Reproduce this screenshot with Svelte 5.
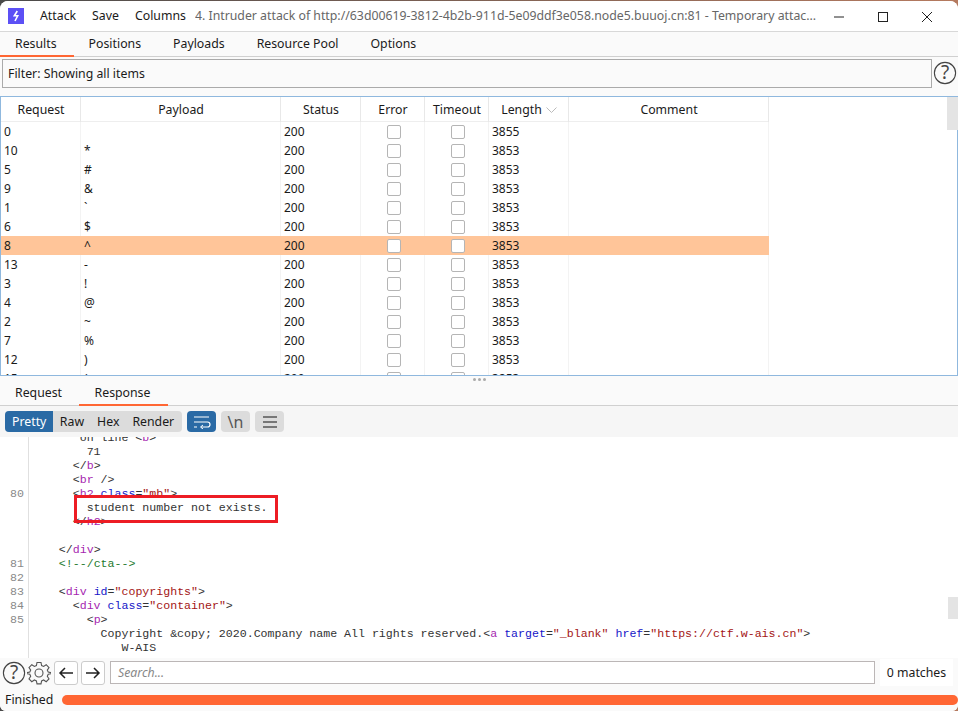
<script>
  const tabs = ['Results', 'Positions', 'Payloads', 'Resource Pool', 'Options'];
  const rows = [
    ['0', '', '3855'], ['10', '*', '3853'], ['5', '#', '3853'], ['9', '&', '3853'],
    ['1', '`', '3853'], ['6', '$', '3853'], ['8', '^', '3853'], ['13', '-', '3853'],
    ['3', '!', '3853'], ['4', '@', '3853'], ['2', '~', '3853'], ['7', '%', '3853'],
    ['12', ')', '3853'], ['15', '(', '3853']
  ];
  const nums = ['', '', '', '', '80', '', '', '', '', '81', '82', '83', '84', '85', '', ''];
</script>

<div class="win">
  <header class="title">
    <span class="logo">
      <svg width="16" height="16" viewBox="0 0 16 16"><rect width="16" height="16" fill="#5c50f5"/><path d="M9.300 3 6.300 7.800h3.400L7 13" fill="none" stroke="#fff" stroke-width="1.600"/></svg>
    </span>
    <nav class="menu"><span>Attack</span><span>Save</span><span>Columns</span></nav>
    <span class="wintitle">4. Intruder attack of http://63d00619-3812-4b2b-911d-5e09ddf3e058.node5.buuoj.cn:81 - Temporary attac...</span>
    <div class="controls">
      <svg width="10" height="10" viewBox="0 0 10 10"><path d="M0 5h10" stroke="#222"/></svg>
      <svg width="10" height="10" viewBox="0 0 10 10"><rect x=".5" y=".5" width="9" height="9" fill="none" stroke="#222"/></svg>
      <svg width="10" height="10" viewBox="0 0 10 10"><path d="m0 0 10 10M10 0 0 10" stroke="#222"/></svg>
    </div>
  </header>

  <div class="tabs main">
    {#each tabs as t, i}<span class="tab" class:on={i === 0}>{t}</span>{/each}
  </div>

  <div class="filter">
    <div class="fbox">Filter: Showing all items</div>
    <svg class="help" width="24" height="24" viewBox="0 0 24 24"><circle cx="12" cy="12" r="10.600" fill="none" stroke="#444" stroke-width="1.100"/><text x="12" y="17.500" text-anchor="middle" class="q">?</text></svg>
  </div>

  <section class="table">
    <div class="grid">
      <div class="row head">
        <span>Request</span><span>Payload</span><span>Status</span><span>Error</span><span>Timeout</span>
        <span class="len">Length <svg width="11" height="6" viewBox="0 0 11 6"><path d="m.5.5 5 5 5-5" fill="none" stroke="#bbb"/></svg></span>
        <span>Comment</span>
      </div>
      {#each rows as r, i}
        <div class="row" class:sel={i === 6}>
          <span>{r[0]}</span><span class="pl">{r[1]}</span><span>200</span>
          <span class="c"><i class="box"></i></span><span class="c"><i class="box"></i></span>
          <span class="lv">{r[2]}</span><span></span>
        </div>
      {/each}
    </div>
    <div class="sb"><div class="thumb"></div></div>
  </section>

  <div class="split"><i></i><i></i><i></i></div>

  <div class="tabs sub">
    <span class="tab">Request</span><span class="tab on">Response</span>
  </div>

  <div class="tools">
    <div class="seg"><span class="act">Pretty</span><span>Raw</span><span>Hex</span><span>Render</span></div>
    <span class="tb blue"><svg width="18" height="14" viewBox="0 0 18 14"><path d="M1 2h15M1 7h13.500a2.500 2.500 0 0 1 0 5H8M1 12h3" fill="none" stroke="#fff" stroke-width="1.200"/><path d="m10 10-2.500 2 2.500 2" fill="none" stroke="#fff"/></svg></span>
    <span class="tb txt">\n</span>
    <span class="tb"><svg width="16" height="12" viewBox="0 0 16 12"><path d="M1 1h14M1 6h14M1 11h14" stroke="#555" stroke-width="1.400"/></svg></span>
  </div>

  <section class="code">
    <div class="nums">{#each nums as n}<div>{n || ' '}</div>{/each}</div>
    <pre class="src">       on line &lt;<b class="t">b</b>&gt;
        71
      &lt;/<b class="t">b</b>&gt;
      &lt;<b class="t">br</b> /&gt;
      &lt;<b class="t">h2</b> <b class="a">class</b>=<b class="v">"mb"</b>&gt;
        student number not exists.
      &lt;/<b class="t">h2</b>&gt;

    &lt;/<b class="t">div</b>&gt;
    <b class="cm">&lt;!--/cta--&gt;</b>

    &lt;<b class="t">div</b> <b class="a">id</b>=<b class="v">"copyrights"</b>&gt;
      &lt;<b class="t">div</b> <b class="a">class</b>=<b class="v">"container"</b>&gt;
        &lt;<b class="t">p</b>&gt;
          Copyright &amp;copy; 2020.Company name All rights reserved.&lt;<b class="t">a</b> <b class="a">target</b>=<b class="v">"_blank"</b> <b class="a">href</b>=<b class="v">"https://ctf.w-ais.cn"</b>&gt;
             W-AIS</pre>
    <div class="mark"></div>
    <div class="cthumb"></div>
  </section>

  <div class="searchbar">
    <svg class="qi" width="24" height="24" viewBox="0 0 24 24"><circle cx="12" cy="12" r="10.600" fill="none" stroke="#444" stroke-width="1.100"/><text x="12" y="17.500" text-anchor="middle" class="q">?</text></svg>
    <svg class="gear" width="24" height="24" viewBox="0 0 24 24"><circle cx="12" cy="12" r="4" fill="none" stroke="#555" stroke-width="1.100"/><path d="M10 1.500h4l.6 3 2 .9 2.600-1.700 2.800 2.800-1.700 2.600.9 2 3 .6v1l-3 .6-.9 2 1.700 2.600-2.800 2.800-2.600-1.700-2 .9-.6 3h-4l-.6-3-2-.9-2.600 1.700-2.800-2.800 1.700-2.600-.9-2-3-.6v-1l3-.6.9-2-1.700-2.600 2.800-2.800 2.600 1.700 2-.9z" fill="none" stroke="#555" stroke-width="1.100"/></svg>
    <span class="nav"><svg width="16" height="14" viewBox="0 0 16 14"><path d="M15 7H2M7 2 2 7l5 5" fill="none" stroke="#222" stroke-width="1.500"/></svg></span>
    <span class="nav"><svg width="16" height="14" viewBox="0 0 16 14"><path d="M1 7h13M9 2l5 5-5 5" fill="none" stroke="#222" stroke-width="1.500"/></svg></span>
    <div class="search">Search...</div>
    <span class="matches">0 matches</span>
  </div>

  <footer class="status">
    <span>Finished</span>
    <div class="bar"></div>
  </footer>
</div>

<style>
  :global(body) { margin: 0; background: linear-gradient(90deg, #4a4a4a, #b57a5f); }
  .win {
    width: 958px; height: 710px; margin-top: 1px; overflow: hidden; display: flex; flex-direction: column;
    background: #fff; color: #1a1a1a;
    font: 12.300px/18px "Noto Sans", "Open Sans", sans-serif;
    border-radius: 8px 8px 6px 6px;
  }
  .title { height: 30px; flex: none; display: flex; align-items: center; border-bottom: 1px solid #d8d8d8; background: #fff; padding-left: 8px; }
  .logo { display: flex; width: 16px; height: 16px; }
  .menu { display: flex; gap: 16px; margin-left: 16px; }
  .wintitle { margin-left: 9px; width: 639px; color: #666; white-space: nowrap; overflow: hidden; }
  .controls { display: flex; gap: 34px; padding-top: 1px; }

  .tabs { display: flex; flex: none; background: #fafafa; border-bottom: 1px solid #d0d0d0; }
  .main { height: 24px; }
  .main .tab { padding: 0 16px; line-height: 23px; }
  .main .tab:first-child { padding: 0 16px 0 15px; }
  .main .tab.on::after { right: -1px; }
  .tab { position: relative; box-sizing: border-box; }
  .tab.on::after { content: ""; position: absolute; left: 0; right: 0; bottom: -1px; height: 2px; background: #ff6633; }

  .filter { height: 39px; flex: none; display: flex; padding: 2px 1px 0 2px; box-sizing: border-box; background: #fafafa; gap: 1px; }
  .fbox { width: 923px; height: 27px; border: 1px solid #aaa; background: #fafafa; padding-left: 5px; line-height: 27px; }
  .help { margin-top: 2px; }
  .q { font: 19px "Noto Sans", sans-serif; fill: #444; }

  .table { height: 280px; flex: none; display: flex; justify-content: space-between; border: 1px solid #8fb8de; border-right: 0; box-sizing: border-box; overflow: hidden; }
  .grid { width: 768px; }
  .row { display: grid; grid-template-columns: 80px 200px 80px 64px 64px 80px 200px; height: 19px; line-height: 19px; font-size: 12px; }
  .row > span { border-right: 1px solid #f3f3f3; padding-left: 3px; box-sizing: border-box; white-space: nowrap; }
  .row .c { padding: 0 0 0 2px; display: flex; align-items: center; justify-content: center; }
  .box { display: block; width: 12px; height: 12px; border: 1px solid #b5b5b5; border-radius: 2px; background: #fff; }
  .sel { background: #ffc599; }
  .sel > span { border-right-color: transparent; }
  .row.head { height: 25px; line-height: 25px; font-size: 12.300px; border-bottom: 1px solid #eee; box-sizing: border-box; }
  .row.head > span { text-align: center; padding: 0 0 0 1px; border-right-color: #e8e8e8; }
  .len { display: flex; align-items: center; justify-content: center; gap: 4px; }
  .sb { width: 11px; background: #fff; margin-top: -1px; box-shadow: inset -1px 0 #8fb8de; }
  .thumb { height: 34px; background: #e4e4e4; }

  .split { height: 6px; flex: none; background: #fafafa; display: flex; justify-content: center; align-items: center; gap: 2px; }
  .split i { width: 3px; height: 3px; border-radius: 50%; background: #aaa; }

  .sub { height: 24px; box-sizing: border-box; }
  .sub .tab { line-height: 22px; }
  .sub .tab:first-child { padding-left: 15px; width: 79px; }
  .sub .tab.on { width: 89px; padding-right: 2px; text-align: center; }

  .tools { height: 31px; flex: none; box-sizing: border-box; padding: 5px 5px 0; display: flex; gap: 5px; background: #f6f6f6; }
  .seg { display: flex; height: 21px; width: 177px; background: #dcdcdc; border-radius: 4px; overflow: hidden; line-height: 21px; }
  .seg span { padding: 0 6.500px; }
  .seg .act { background: #2a6aa5; color: #fff; padding: 0 7px; }
  .tb { width: 29px; height: 21px; border-radius: 4px; background: #dcdcdc; display: flex; align-items: center; justify-content: center; }
  .blue { background: #2a6aa5; }
  .txt { font-size: 16px; color: #555; }

  .code { position: relative; height: 221px; flex: none; display: flex; background: #fff; overflow: hidden; }
  .nums { width: 28px; flex: none; border-right: 1px solid #e0e0e0; font: 11.600px/14px "Liberation Mono", monospace; color: #8a8a8a; text-align: right; margin-top: -6px; padding-bottom: 6px; }
  .nums div { height: 14px; padding-right: 4px; }
  .src { margin: -6px 0 0 2px; font: 11.600px/14px "Liberation Mono", monospace; color: #333; }
  .src b { font-weight: 400; }
  .t { color: #a61fb0; }
  .a { color: #1515c8; }
  .v { color: #a31515; }
  .cm { color: #1e7a2e; }
  .mark { position: absolute; left: 74px; top: 58px; width: 198px; height: 22px; border: 3px solid #ed1c24; }
  .cthumb { position: absolute; right: 0; top: 160px; width: 10px; height: 22px; background: #e4e4e4; }

  .searchbar { height: 29px; flex: none; display: flex; align-items: center; background: #fafafa; box-sizing: border-box; padding: 0 5px 0 2px; }
  .qi { margin-right: 1px; }
  .gear { margin-right: 3px; }
  .nav { width: 24px; height: 24px; box-sizing: border-box; border: 1px solid #ccc; border-radius: 3px; background: #fff; display: flex; align-items: center; justify-content: center; margin-right: 3px; }
  .search { flex: 1; height: 23px; box-sizing: border-box; border: 1px solid #bbb6b6; background: #fff; margin-left: 2px; padding-left: 7px; line-height: 21px; font-style: italic; color: #888; }
  .matches { width: 73px; height: 27px; background: #fff; text-align: center; line-height: 27px; margin-left: 5px; }

  .status { height: 24px; box-sizing: border-box; padding: 1px 0 0 5px; flex: none; display: flex; align-items: center; background: #fafafa; }
  .status span { width: 57px; flex: none; }
  .bar { flex: 1; height: 10px; border-radius: 5px; background: #ff6633; }
</style>
